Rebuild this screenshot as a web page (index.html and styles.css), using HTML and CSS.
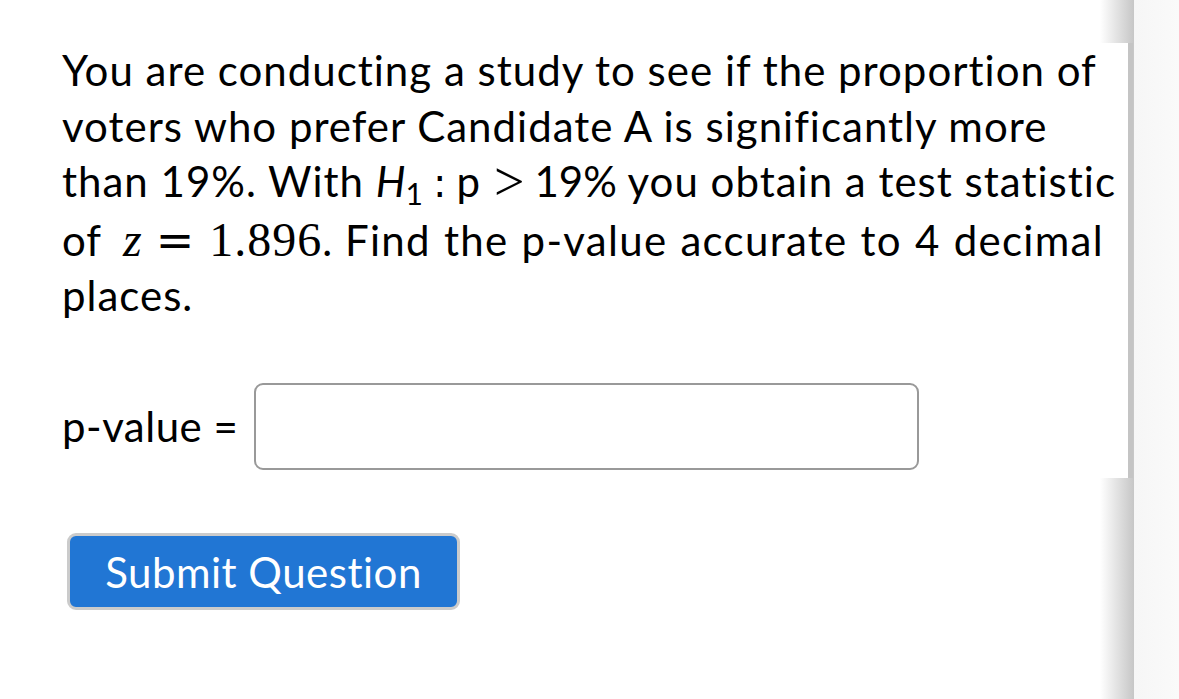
FILE: index.html
```html
<!DOCTYPE html>
<html>
<head>
<meta charset="utf-8">
<link rel="stylesheet" href="styles.css">
</head>
<body>
<div class="page">
  <div class="panel">
    <p class="question">You are conducting a study to see if the proportion of<br>voters who prefer Candidate A is significantly more<br>than 19%. With <span class="m"><span class="mi mh">H</span><sub class="msub">1</sub><span class="mo mcolon">:</span><span class="mt">p</span><span class="mo mgt">&gt;</span><span class="mt">19%</span></span> you obtain a test statistic<br>of <span class="m"><span class="mz">z</span><span class="mo meq">=</span><span class="mn">1.896</span></span>. <span class="rest">Find the p-value accurate to 4 decimal</span><br>places.</p>
    <div class="answer-row">
      <span class="label">p-value =</span>
      <input class="answer" type="text">
    </div>
  </div>
  <div class="actions">
    <button class="submit" type="button">Submit Question</button>
  </div>
</div>
</body>
</html>
```
FILE: styles.css
```css
html, body {
  margin: 0;
  padding: 0;
}
body {
  width: 1179px;
  height: 699px;
  overflow: hidden;
  font-family: "Lato", "DejaVu Sans", sans-serif;
  font-variant-ligatures: none;
  color: #000;
  background: linear-gradient(to right, #ffffff 0, #ffffff 1100px, #c6c6c6 1134px, #f6f6f6 1134px, #fafafa 1179px);
}
.page {
  padding-top: 43px;
}
.panel {
  width: 1066px;
  height: 435px;
  padding-left: 62px;
  background: #fff;
  border-right: 5px solid #c4c4c4;
  box-sizing: content-box;
}
.question {
  margin: 0;
  padding-top: 0;
  font-size: 42px;
  letter-spacing: 1px;
  line-height: 55.5px;
  white-space: nowrap;
}
.rest {
  letter-spacing: 1.3px;
  word-spacing: 1px;
}
.m {
  white-space: nowrap;
  letter-spacing: 0;
}
.mi {
  font-style: italic;
}
.mh {
  margin-left: 0;
}
.msub {
  font-size: 30px;
  vertical-align: -8px;
  line-height: 0;
}
.mo {
  font-family: "DejaVu Serif", serif;
  font-size: 44px;
}
.mcolon {
  font-family: "DejaVu Sans", sans-serif;
  font-size: 40px;
  margin: 0 10px 0 10px;
}
.mgt {
  font-family: "Liberation Serif", serif;
  font-size: 54px;
  line-height: 1;
  vertical-align: -3px;
  margin: 0 10px 0 14px;
}
.mz {
  font-family: "Liberation Serif", serif;
  font-style: italic;
  font-size: 48px;
  margin-left: 10px;
}
.meq {
  font-size: 46px;
  margin: 0 15px 0 14px;
}
.mn {
  font-family: "Liberation Serif", serif;
  font-size: 48px;
  letter-spacing: 1px;
}
.answer-row {
  display: flex;
  align-items: center;
  gap: 16px;
  margin-top: 59px;
}
.label {
  font-size: 42px;
  letter-spacing: 0.5px;
}
.answer {
  width: 665px;
  height: 87px;
  box-sizing: border-box;
  border: 2px solid #999;
  border-radius: 9px;
  background: #fff;
  margin: 0;
  padding: 0 12px;
  font-size: 36px;
  outline: none;
}
.actions {
  padding-left: 67px;
  padding-top: 55px;
}
.submit {
  width: 393px;
  height: 77px;
  box-sizing: border-box;
  background: #2176d4;
  border: 3px solid #cbcbcb;
  border-radius: 9px;
  color: #fff;
  font-family: "Lato", "DejaVu Sans", sans-serif;
  font-variant-ligatures: none;
  font-size: 42px;
  letter-spacing: 0.5px;
  padding: 0;
  margin: 0;
}
```
